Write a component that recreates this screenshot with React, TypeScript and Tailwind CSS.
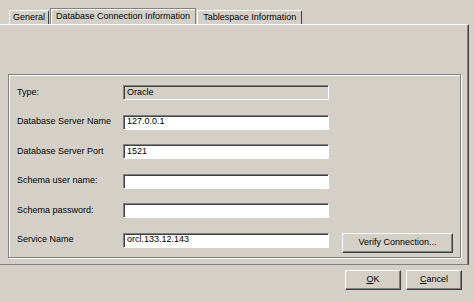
const sunken =
  "h-[15px] w-[206px] border-t border-l border-t-[#808080] border-l-[#808080] border-b border-r border-b-white border-r-white shadow-[inset_1px_1px_0_#404040] px-[3px] flex items-center text-black";

const raised =
  "border border-t-white border-l-white border-r-[#404040] border-b-[#404040] shadow-[inset_-1px_-1px_0_#808080] flex items-center justify-center";

function Row({ label, value, disabled }: { label: string; value?: string; disabled?: boolean }) {
  return (
    <div className="flex items-center h-[15px]">
      <div className="w-[106px] text-black">{label}</div>
      <div className={`${sunken} ${disabled ? "bg-[#d4d0c8] text-[#8c8c8c]" : "bg-white"}`}>{value}</div>
    </div>
  );
}

export default function App() {
  return (
    <div
      className="w-[474px] h-[302px] bg-[#d4d0c8] text-[9px] text-black flex flex-col overflow-hidden"
      style={{ fontFamily: '"Liberation Sans", Arial, sans-serif' }}
    >
      {/* tabs */}
      <div className="flex items-end h-[24px] pl-[9px]">
        <div className="h-[14px] px-[3px] flex items-center border-l border-l-white border-t border-t-white border-r border-r-[#404040] rounded-tl-[2px] rounded-tr-[2px]">
          General
        </div>
        <div className="h-[16px] px-[5px] flex items-center border border-[#808080] border-b-0 shadow-[inset_1px_1px_0_#fff] bg-[#d4d0c8] mx-[1px]">
          Database Connection Information
        </div>
        <div className="h-[14px] px-[5px] flex items-center border-l border-l-white border-t border-t-white border-r border-r-[#404040] rounded-tr-[2px]">
          Tablespace Information
        </div>
      </div>

      {/* tab panel */}
      <div className="w-[469px] h-[241px] border-t border-t-white border-r border-r-[#404040] border-b border-b-[#808080] shadow-[inset_-1px_0_0_#808080] pt-[49px] pl-[8px] pr-[7px]">
        <div className="h-[184px] border border-[#808080] shadow-[inset_1px_1px_0_#fff,1px_1px_0_#fff] pt-[10px] pl-[8px] flex flex-col gap-[14.5px]">
          <Row label="Type:" value="Oracle" disabled />
          <Row label="Database Server Name" value="127.0.0.1" />
          <Row label="Database Server Port" value="1521" />
          <Row label="Schema user name:" />
          <Row label="Schema password:" />
          <div className="flex items-start h-[15px]">
            <Row label="Service Name" value="orcl.133.12.143" />
            <div className={`${raised} shrink-0 ml-[13px] w-[111px] h-[20px]`}>Verify Connection...</div>
          </div>
        </div>
      </div>

      {/* dialog buttons */}
      <div className="flex justify-end gap-[5px] pr-[12px] pt-[5px]">
        <div className={`${raised} w-[56px] h-[20px]`}>
          <span>
            <span className="underline">O</span>K
          </span>
        </div>
        <div className={`${raised} w-[56px] h-[20px]`}>
          <span>
            <span className="underline">C</span>ancel
          </span>
        </div>
      </div>
    </div>
  );
}
